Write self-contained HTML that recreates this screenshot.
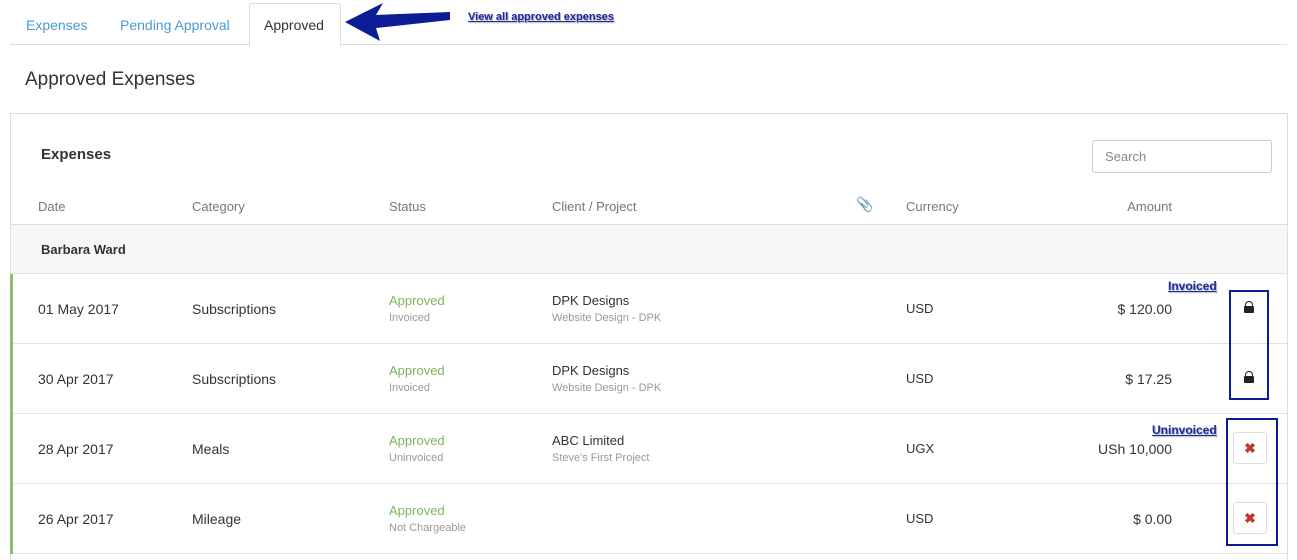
<!DOCTYPE html>
<html style="height:560px;overflow:hidden"><head><style>
body{margin:0;width:1297px;height:560px;overflow:hidden;background:#fff;font-family:"Liberation Sans",sans-serif;color:#333;position:relative}
.a{position:absolute;white-space:nowrap}
.tab{font-size:14px;color:#4a9ad6;top:17px}
.row{position:absolute;left:10px;width:1277px;height:69px;border-bottom:1px solid #e3e3e3}
.row .bar{position:absolute;left:0;top:0;width:3px;height:70px;background:#8bbf6c}
.c{position:absolute;font-size:14px;color:#333;white-space:nowrap}
.s{font-size:11px;color:#999}
.g{color:#7ab55c}
.btn{position:absolute;left:1223px;width:32px;height:30px;border:1px solid #ddd;border-radius:3px;color:#c0392b;font-size:14px;font-weight:bold;text-align:center;line-height:30px}
.lock{position:absolute;left:1234px;width:10px;height:7px;background:#222;border-radius:1px}
.lock:before{content:"";position:absolute;left:1px;top:-5px;width:6px;height:5px;border:1.5px solid #222;border-bottom:none;border-radius:4px 4px 0 0}
.lab{position:absolute;font-size:12px;font-weight:bold;color:#1a2a9a;text-decoration:underline;text-shadow:1px 1px 1px #aaa}
</style></head><body>
<div class="a" style="left:10px;top:44px;width:1277px;border-top:1px solid #ddd"></div>
<div class="a tab" style="left:26px">Expenses</div>
<div class="a tab" style="left:120px">Pending Approval</div>
<div class="a" style="left:249px;top:3px;width:90px;height:42px;border:1px solid #ddd;border-bottom:none;background:#fff;border-radius:3px 3px 0 0"></div>
<div class="a" style="left:264px;top:17px;font-size:14px;color:#333">Approved</div>
<svg class="a" style="left:340px;top:0px" width="120" height="44"><polygon points="5,22 43,3 36,15 110,12 110,20 36,28 40,41" fill="#0b1c96"/></svg>
<div class="lab" style="left:468px;top:11px;font-size:11px">View all approved expenses</div>
<div class="a" style="left:25px;top:69px;font-size:19px;color:#333">Approved Expenses</div>
<div class="a" style="left:10px;top:113px;width:1276px;height:460px;border:1px solid #ddd;border-bottom:none"></div>
<div class="a" style="left:41px;top:146px;font-size:15px;font-weight:bold">Expenses</div>
<div class="a" style="left:1092px;top:140px;width:178px;height:31px;border:1px solid #ccc;border-radius:3px"></div>
<div class="a" style="left:1105px;top:149px;font-size:13px;color:#888">Search</div>
<div class="a" style="left:10px;top:199px;font-size:13px;color:#777;width:1277px;height:25px;border-bottom:1px solid #ddd">
<span class="a" style="left:28px">Date</span><span class="a" style="left:182px">Category</span><span class="a" style="left:379px">Status</span><span class="a" style="left:542px">Client / Project</span><span class="a" style="left:846px;top:-3px;font-size:14px;color:#999">&#128206;</span><span class="a" style="left:896px">Currency</span><span class="a" style="right:115px">Amount</span></div>
<div class="a" style="left:11px;top:225px;width:1276px;height:48px;background:#f7f7f7;border-bottom:1px solid #e3e3e3"></div>
<div class="a" style="left:41px;top:242px;font-size:13px;font-weight:bold">Barbara Ward</div>

<div class="row" style="top:274px"><div class="bar"></div>
<div class="c" style="left:28px;top:27px">01 May 2017</div><div class="c" style="left:182px;top:27px">Subscriptions</div>
<div class="c g" style="left:379px;top:19px;font-size:13px">Approved</div><div class="c s" style="left:379px;top:38px">Invoiced</div>
<div class="c" style="left:542px;top:19px;font-size:13px">DPK Designs</div><div class="c s" style="left:542px;top:38px">Website Design - DPK</div>
<div class="c" style="left:896px;top:27px;font-size:13px">USD</div><div class="c" style="right:115px;top:27px">$ 120.00</div>
<div class="lock" style="top:32px"></div></div>

<div class="row" style="top:344px"><div class="bar"></div>
<div class="c" style="left:28px;top:27px">30 Apr 2017</div><div class="c" style="left:182px;top:27px">Subscriptions</div>
<div class="c g" style="left:379px;top:19px;font-size:13px">Approved</div><div class="c s" style="left:379px;top:38px">Invoiced</div>
<div class="c" style="left:542px;top:19px;font-size:13px">DPK Designs</div><div class="c s" style="left:542px;top:38px">Website Design - DPK</div>
<div class="c" style="left:896px;top:27px;font-size:13px">USD</div><div class="c" style="right:115px;top:27px">$ 17.25</div>
<div class="lock" style="top:32px"></div></div>

<div class="row" style="top:414px"><div class="bar"></div>
<div class="c" style="left:28px;top:27px">28 Apr 2017</div><div class="c" style="left:182px;top:27px">Meals</div>
<div class="c g" style="left:379px;top:19px;font-size:13px">Approved</div><div class="c s" style="left:379px;top:38px">Uninvoiced</div>
<div class="c" style="left:542px;top:19px;font-size:13px">ABC Limited</div><div class="c s" style="left:542px;top:38px">Steve's First Project</div>
<div class="c" style="left:896px;top:27px;font-size:13px">UGX</div><div class="c" style="right:115px;top:27px">USh 10,000</div>
<div class="btn" style="top:18px">&#10006;</div></div>

<div class="row" style="top:484px"><div class="bar"></div>
<div class="c" style="left:28px;top:27px">26 Apr 2017</div><div class="c" style="left:182px;top:27px">Mileage</div>
<div class="c g" style="left:379px;top:19px;font-size:13px">Approved</div><div class="c s" style="left:379px;top:38px">Not Chargeable</div>
<div class="c" style="left:896px;top:27px;font-size:13px">USD</div><div class="c" style="right:115px;top:27px">$ 0.00</div>
<div class="btn" style="top:18px">&#10006;</div></div>

<div class="a" style="left:1229px;top:290px;width:36px;height:106px;border:2px solid #0b1c96"></div>
<div class="a" style="left:1226px;top:418px;width:48px;height:124px;border:2px solid #0b1c96"></div>
<div class="lab" style="left:1168px;top:279px">Invoiced</div>
<div class="lab" style="left:1152px;top:423px">Uninvoiced</div>
</body></html>
